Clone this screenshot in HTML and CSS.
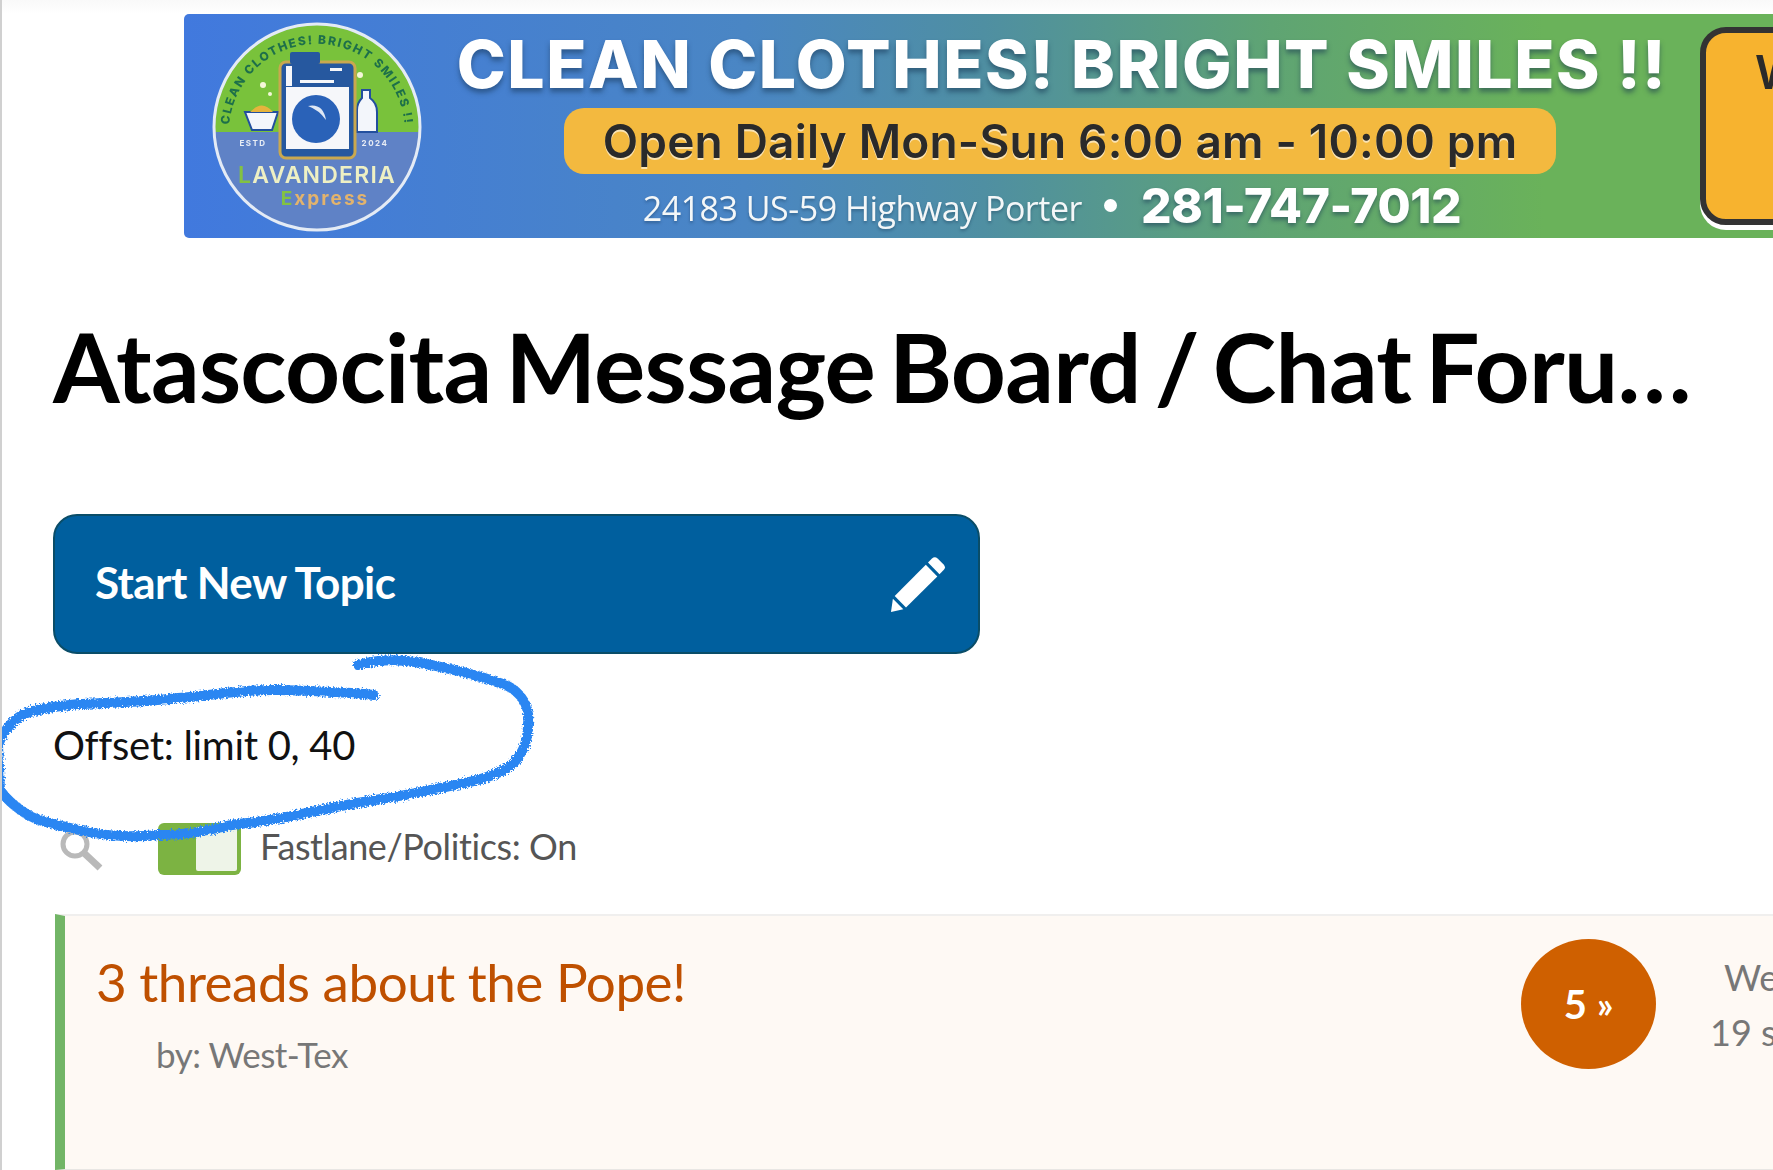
FILE: index.html
```html
<!DOCTYPE html>
<html lang="en">
<head>
<meta charset="utf-8">
<title>Atascocita Message Board</title>
<link rel="stylesheet" href="styles.css">
</head>
<body>
<div class="page">
  <div class="banner">
    <svg class="logo" viewBox="0 0 210 224" width="210" height="224">
      <defs>
        <clipPath id="disc"><circle cx="105" cy="113" r="102"/></clipPath>
        <path id="arc" d="M17 118A88 88 0 0 1 193 118"/>
        <filter id="soft"><feGaussianBlur stdDeviation="0.6"/></filter>
      </defs>
      <g filter="url(#soft)">
        <g clip-path="url(#disc)">
          <rect x="0" y="0" width="210" height="224" fill="#5f82c6"/>
          <path d="M0 118V0H210V118Z" fill="#79c23a"/>
        </g>
        <circle cx="105" cy="113" r="103" fill="none" stroke="#e4ebf5" stroke-width="3"/>
        <text class="logo-arc"><textPath href="#arc" startOffset="50%" text-anchor="middle">CLEAN CLOTHES! BRIGHT SMILES !!</textPath></text>
        <path d="M33 98h33l-6 18H40Z" fill="#f3f6fb" stroke="#234f9e" stroke-width="2"/>
        <path d="M38 98q12-13 23 0Z" fill="#e6b43e"/>
        <path d="M150 76h8v8q7 5 7 14v20h-20V96q0-7 5-12Z" fill="#f3f6fb" stroke="#234f9e" stroke-width="2"/>
        <circle cx="51" cy="71" r="3" fill="#f4f7d8"/>
        <circle cx="58" cy="80" r="2" fill="#f4f7d8"/>
        <circle cx="148" cy="61" r="3" fill="#f4f7d8"/>
        <rect x="68" y="48" width="75" height="96" rx="6" fill="#26599f" stroke="#c9a84f" stroke-width="3"/>
        <rect x="78" y="38" width="30" height="12" rx="2" fill="#26599f"/>
        <rect x="74" y="73" width="63" height="62" fill="#f6f7fa"/>
        <rect x="74" y="52" width="6" height="20" fill="#f6f7fa"/>
        <rect x="88" y="66" width="34" height="3" fill="#f6f7fa"/>
        <rect x="118" y="54" width="12" height="3" fill="#f6f7fa"/>
        <circle cx="104" cy="105" r="24" fill="#2a62b8"/>
        <path d="M96 92q15-3 18 14q-7-10-18-14Z" fill="#dfe8f5"/>
        <text class="logo-year" x="41" y="132" text-anchor="middle">ESTD</text>
        <text class="logo-year" x="163" y="132" text-anchor="middle">2024</text>
        <text class="logo-name" x="105" y="169" text-anchor="middle"><tspan fill="#83c243">L</tspan>AVANDERIA</text>
        <text class="logo-sub" x="113" y="191" text-anchor="middle"><tspan fill="#83c243">E</tspan>xpress</text>
      </g>
    </svg>
    <div class="banner-copy">
      <div class="banner-head">CLEAN CLOTHES! BRIGHT SMILES !!</div>
      <div class="banner-pill">Open Daily Mon-Sun 6:00 am - 10:00 pm</div>
      <div class="banner-foot"><span class="banner-addr">24183 US-59 Highway Porter</span><span class="banner-dot"></span><span class="banner-phone">281-747-7012</span></div>
    </div>
    <div class="banner-box"><span>W</span><span class="box-second">E</span></div>
  </div>

  <h1 class="title">Atascocita Message Board / Chat Foru…</h1>

  <a class="new-topic">
    <span class="new-topic-label">Start New Topic</span>
    <svg class="pencil" viewBox="0 0 56 56" width="56" height="56">
      <path d="M41 2.500a4 4 0 0 1 5.600 0l6 6a4 4 0 0 1 0 5.600L48.500 18.200 37 6.500Z" fill="#fff"/>
      <path d="M34.800 8.700 46.300 20.400 15 51.500 3.700 40Z" fill="#fff"/>
      <path d="M1.900 42.800 12.300 53.300 0 56Z" fill="#fff"/>
    </svg>
  </a>

  <p class="offset">Offset: limit 0, 40</p>

  <div class="tools">
    <svg class="search" viewBox="0 0 46 42" width="46" height="42">
      <circle cx="17" cy="14" r="12" fill="none" stroke="#b9b9b9" stroke-width="5"/>
      <path d="M26 23 42 38" stroke="#b9b9b9" stroke-width="7"/>
    </svg>
    <span class="toggle"><span class="toggle-knob"></span></span>
    <span class="toggle-label">Fastlane/Politics: On</span>
  </div>

  <div class="topic">
    <div class="topic-main">
      <a class="topic-title">3 threads about the Pope!</a>
      <div class="topic-by">by: West-Tex</div>
    </div>
    <div class="topic-pages">5 <span class="raquo">»</span></div>
    <div class="topic-meta">
      <div class="meta-day">Wed</div>
      <div class="meta-ago">19 s</div>
    </div>
  </div>

  <svg class="scribble" viewBox="0 0 540 190" width="540" height="190">
    <defs>
      <filter id="rough" x="-5%" y="-10%" width="110%" height="120%">
        <feTurbulence type="fractalNoise" baseFrequency="0.6" numOctaves="2" seed="4"/>
        <feDisplacementMap in="SourceGraphic" scale="6"/>
      </filter>
    </defs>
    <path filter="url(#rough)" d="M358 13C375 8 395 7 415 10C445 15 480 24 506 33C522 41 530 55 528 72C528 92 520 108 506 117C485 128 465 131 435 137C400 145 370 148 336 155C300 162 270 170 237 172C210 177 185 184 158 183C130 186 105 184 79 178C55 172 40 170 28 163C15 155 6 147 0 138L-2 93C4 78 12 68 24 62C40 56 58 54 79 52C110 51 145 50 178 46C210 44 245 37 277 38C310 39 345 40 374 43" fill="none" stroke="#2a86f2" stroke-width="10" stroke-linecap="round"/>
  </svg>
</div>
</body>
</html>
```
FILE: styles.css
```css
html, body {
  margin: 0;
  padding: 0;
  background: #fff;
}

body {
  font-family: Lato, "Open Sans", sans-serif;
  height: 1170px;
  overflow: hidden;
}

.page {
  position: relative;
  width: 1773px;
  height: 1170px;
  box-sizing: border-box;
  border-left: 2px solid #d0d0d0;
  padding: 14px 0 0 51px;
  overflow: hidden;
  background: linear-gradient(#f9f9f9 0, #fff 14px);
}

.banner {
  display: flex;
  align-items: flex-start;
  margin-left: 131px;
  height: 224px;
  width: 1600px;
  border-radius: 5px 0 0 5px;
  background: linear-gradient(90deg, #4179de 0%, #4a86c4 35%, #4f8fa2 50%, #5fa473 68%, #6ab25a 85%, #6ab25a 100%);
}

.logo {
  flex: none;
  margin-left: 28px;
}

.logo-arc {
  font: 800 12px Inter, sans-serif;
  fill: #1f6f4a;
  letter-spacing: 1.600px;
}

.logo-year {
  font: 700 8px Inter, sans-serif;
  fill: #e8edf5;
  letter-spacing: 1.500px;
}

.logo-name {
  font: 600 23px Inter, sans-serif;
  fill: #eef0c4;
  letter-spacing: 1.200px;
}

.logo-sub {
  font: 700 19px Inter, sans-serif;
  fill: #e2b36d;
  letter-spacing: 2px;
}

.banner-copy {
  flex: none;
  width: 1222px;
  margin-left: 27px;
  display: flex;
  flex-direction: column;
  align-items: center;
  filter: blur(0.5px);
}

.banner-head {
  margin: 9px 0 0 4px;
  height: 85px;
  font: 800 66px/82px Inter, sans-serif;
  color: #fff;
  letter-spacing: 1.500px;
  white-space: nowrap;
  text-shadow: 0 4px 5px rgba(20, 50, 80, 0.5);
}

.banner-pill {
  box-sizing: border-box;
  width: 992px;
  height: 66px;
  border-radius: 20px;
  background: #f3b93f;
  font: 600 46px/66px Inter, sans-serif;
  color: #2a2a2a;
  letter-spacing: 0.200px;
  text-align: center;
  white-space: nowrap;
  text-shadow: 0 2px 0 rgba(255, 255, 255, 0.6);
}

.banner-foot {
  display: flex;
  align-items: center;
  height: 62px;
  margin-right: 16px;
}

.banner-addr {
  margin-top: 6px;
  font: 400 34px "Open Sans", sans-serif;
  color: #f4f7f8;
  letter-spacing: -0.500px;
  text-shadow: 0 2px 3px rgba(20, 50, 80, 0.4);
}

.banner-dot {
  width: 13px;
  height: 13px;
  margin: 0 24px 0 22px;
  border-radius: 50%;
  background: #fff;
}

.banner-phone {
  font: 800 48px Inter, sans-serif;
  color: #fff;
  letter-spacing: -0.400px;
  text-shadow: 0 3px 4px rgba(20, 50, 80, 0.5);
}

.banner-box {
  flex: none;
  box-sizing: border-box;
  display: flex;
  flex-direction: column;
  align-items: flex-start;
  margin: 13px 0 0 29px;
  width: 200px;
  height: 198px;
  padding: 14px 0 0 49px;
  border: 6px solid #333;
  border-radius: 26px;
  background: #f7b32f;
  box-shadow: 0 5px 0 #fff;
  font: 600 46px/50px Inter, sans-serif;
  color: #2a2a2a;
  filter: blur(0.5px);
}

.box-second {
  margin-left: 16px;
}

.title {
  margin: 73px 0 0;
  font-size: 96px;
  line-height: 110px;
  font-weight: 700;
  color: #000;
  letter-spacing: -0.750px;
  word-spacing: -8.500px;
  white-space: nowrap;
}

.new-topic {
  box-sizing: border-box;
  display: flex;
  align-items: center;
  justify-content: space-between;
  width: 927px;
  height: 140px;
  margin-top: 93px;
  padding: 0 31px 0 40px;
  border: 2px solid #0a4d68;
  border-radius: 24px;
  background: #005f9e;
  color: #fff;
  font-size: 44px;
  font-weight: 700;
  letter-spacing: -0.600px;
}

.new-topic-label {
  margin-bottom: 4px;
}

.offset {
  margin: 67px 0 0;
  font-size: 40px;
  line-height: 48px;
  color: #111;
  letter-spacing: -0.300px;
}

.tools {
  display: flex;
  align-items: center;
  height: 52px;
  margin-top: 54px;
}

.search {
  flex: none;
  margin: 4px 0 0 5px;
}

.toggle {
  flex: none;
  box-sizing: border-box;
  display: flex;
  justify-content: flex-end;
  width: 83px;
  height: 52px;
  margin-left: 54px;
  padding: 4px;
  border-radius: 6px;
  background: #7cb342;
}

.toggle-knob {
  width: 41px;
  border-radius: 2px;
  background: #eef4e8;
}

.toggle-label {
  margin: 0 0 6px 19px;
  font-size: 36px;
  color: #555;
  letter-spacing: -0.400px;
}

.topic {
  box-sizing: border-box;
  display: flex;
  width: 1720px;
  height: 256px;
  margin: 39px 0 0 2px;
  border-top: 2px solid #f0efee;
  border-bottom: 1px solid #e8e6e3;
  border-left: 10px solid #72b566;
  background: #fef9f4;
}

.topic-main {
  flex: none;
  width: 1456px;
  padding: 35px 0 0 31px;
  box-sizing: border-box;
}

.topic-title {
  display: block;
  font-size: 53px;
  line-height: 62px;
  color: #bf5000;
  letter-spacing: -0.500px;
}

.topic-by {
  margin: 19px 0 0 60px;
  font-size: 35px;
  line-height: 44px;
  color: #777;
  letter-spacing: -0.500px;
}

.topic-pages {
  flex: none;
  display: flex;
  align-items: center;
  justify-content: center;
  gap: 10px;
  width: 135px;
  height: 130px;
  margin-top: 23px;
  border-radius: 50%;
  background: #cf6000;
  color: #fff;
  font-size: 40px;
  font-weight: 700;
}

.raquo {
  font-size: 36px;
}

.topic-meta {
  flex: none;
  margin: 34px 0 0 54px;
  text-align: left;
  white-space: nowrap;
  font-size: 36px;
  line-height: 55px;
  color: #777;
}

.meta-day {
  margin-left: 14px;
}

.scribble {
  position: absolute;
  left: -2px;
  top: 652px;
  overflow: visible;
  pointer-events: none;
}
```
